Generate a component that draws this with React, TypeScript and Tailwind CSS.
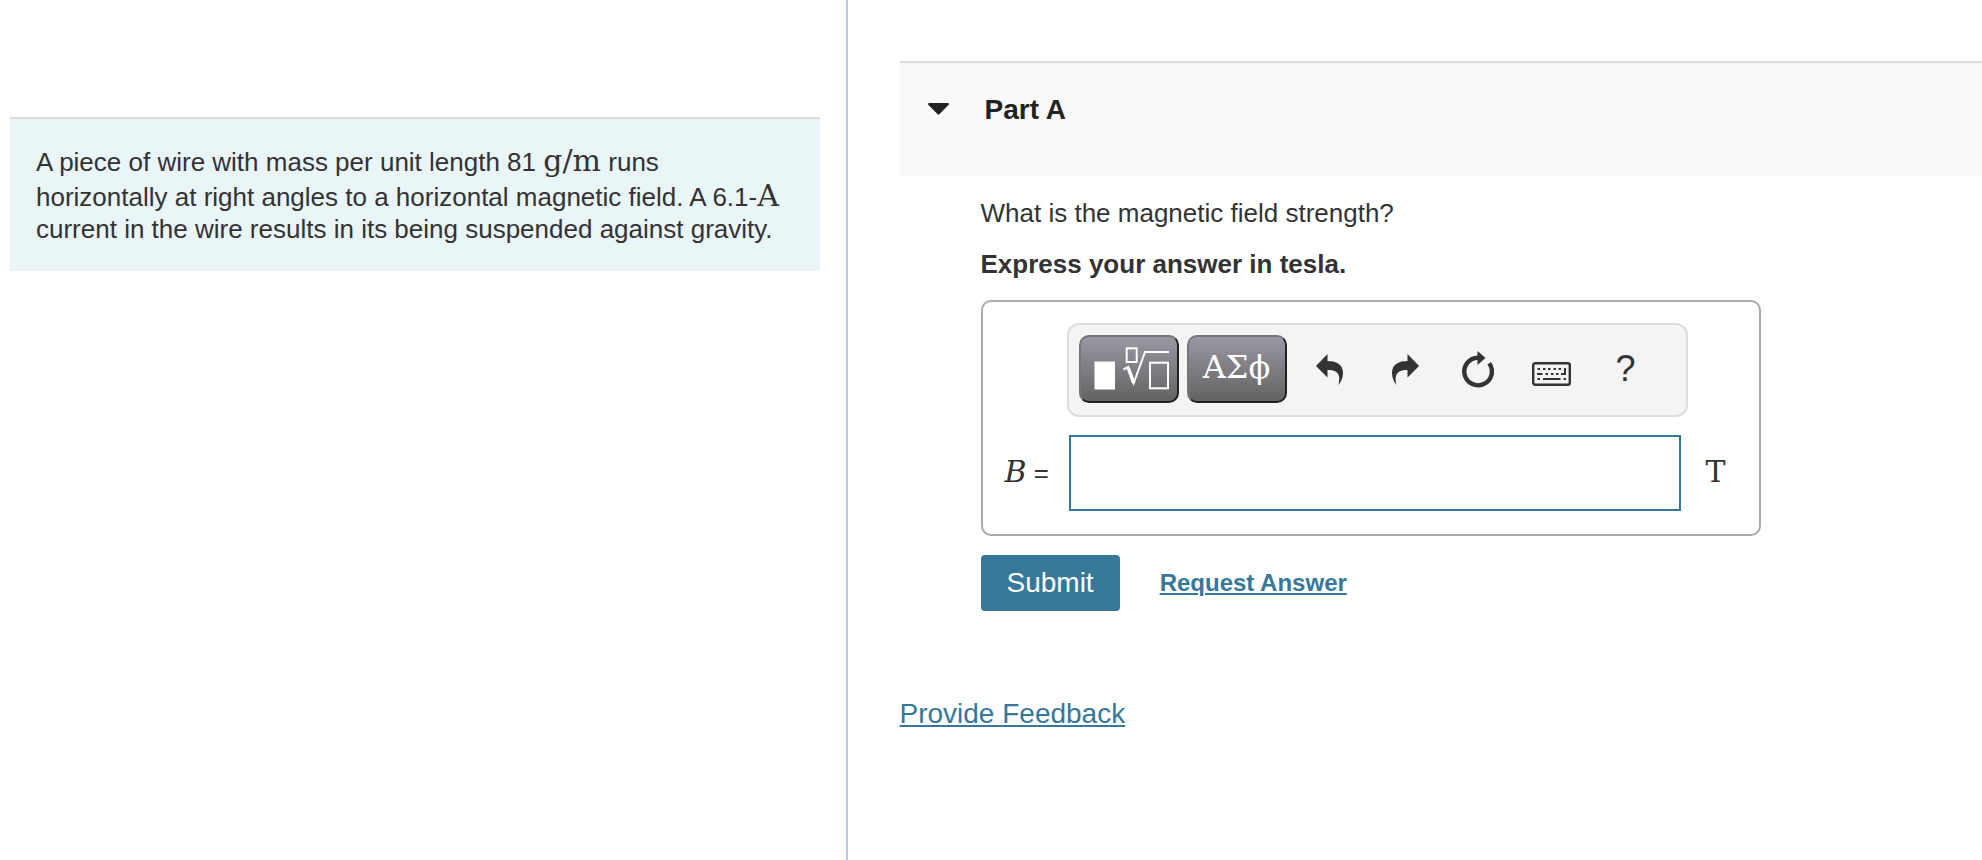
import { useState } from "react";
import type { ReactNode } from "react";

export default function App() {
  const [answer, setAnswer] = useState<string>("");

  const renderTools = tools.map((tool) => {
    return (
      <button
        key={tool.label}
        type="button"
        aria-label={tool.label}
        className="flex h-full w-[74px] items-center justify-center text-4xl text-[#333]"
      >
        {tool.icon}
      </button>
    );
  });

  return (
    <div className="flex min-h-screen bg-white font-['Liberation_Sans',Arial,sans-serif] text-[26px] leading-8 text-[#333]">
      <aside className="min-w-0 flex-[424] border-r-2 border-[#bdcadd] pt-[117px] pr-[26px] pl-[10px]">
        <p className="border-t-2 border-[#ddd] bg-[#eaf5f8] pt-6 pr-[30px] pb-[26px] pl-[26px]">
          A piece of wire with mass per unit length 81 <MathText>g/m</MathText>{" "}
          runs horizontally at right angles to a horizontal magnetic field. A
          6.1-<MathText>A</MathText> current in the wire results in its being
          suspended against gravity.
        </p>
      </aside>

      <main className="min-w-0 flex-[567] pt-[61px] pl-[52px]">
        <section>
          <div className="border-t-2 border-[#ddd] bg-[#f9f9f9] pt-[31px] pb-[50px] pl-7">
            <button
              type="button"
              className="flex items-center gap-9 text-[28px] font-bold text-[#222]"
            >
              <svg width="21" height="14" viewBox="0 0 21 14">
                <path
                  d="M1.4 0h18.2c1.2 0 1.7 1.2.9 2l-9.2 9.3c-.5.5-1.1.5-1.6 0L.5 2C-.3 1.2.2 0 1.4 0z"
                  fill="currentColor"
                />
              </svg>
              Part A
            </button>
          </div>

          <div className="pt-[21px] pl-[81px]">
            <p>What is the magnetic field strength?</p>
            <p className="mt-[19px] font-bold">Express your answer in tesla.</p>

            <div className="mt-5 max-w-[780px] rounded-[10px] border-2 border-[#aaa] pt-[21px] pb-[23px]">
              <div className="mr-[71px] ml-[84px] flex h-[94px] items-start rounded-xl border-2 border-[#ddd] bg-[#f4f4f4] p-[10px]">
                <button
                  type="button"
                  aria-label="Templates"
                  className="h-[68px] w-[100px] rounded-[10px] border-2 border-t-[#767676] border-r-[#212121] border-b-[#212121] border-l-[#767676] bg-linear-to-b from-[#9b98a3] to-[#636363]"
                >
                  <TemplateIcon />
                </button>
                <button
                  type="button"
                  aria-label="Symbols"
                  className="ml-2 h-[68px] w-[100px] rounded-[10px] border-2 border-t-[#767676] border-r-[#212121] border-b-[#212121] border-l-[#767676] bg-linear-to-b from-[#9b98a3] to-[#636363] pb-1 font-['DejaVu_Serif',serif] text-[32px] text-white"
                >
                  ΑΣϕ
                </button>
                <div className="ml-[6px] flex h-[68px]">{renderTools}</div>
              </div>

              <div className="mt-[18px] flex items-center pl-[22px]">
                <label htmlFor="answer" className="w-[64px] pb-1 whitespace-nowrap">
                  <i className="font-['DejaVu_Serif',serif] text-[30px] leading-[35px]">
                    B
                  </i>{" "}
                  =
                </label>
                <input
                  id="answer"
                  type="text"
                  value={answer}
                  onChange={(e) => setAnswer(e.target.value)}
                  className="h-[76px] min-w-0 flex-1 border-2 border-[#36789a] px-3 outline-none"
                />
                <span className="mr-[33px] ml-6 pb-1">
                  <MathText>T</MathText>
                </span>
              </div>
            </div>

            <div className="mt-[19px] flex items-center gap-10">
              <button
                type="button"
                className="h-14 rounded bg-[#36789a] px-[26px] text-[28px] text-white"
              >
                Submit
              </button>
              <a
                href="#request"
                className="text-2xl font-bold text-[#36789a] underline decoration-2 underline-offset-2"
              >
                Request Answer
              </a>
            </div>
          </div>
        </section>

        <a
          href="#feedback"
          className="mt-[87px] inline-block text-[28px] text-[#36789a] underline decoration-2 underline-offset-2"
        >
          Provide Feedback
        </a>
      </main>
    </div>
  );
}

function MathText({ children }: { children: ReactNode }) {
  return (
    <span className="font-['DejaVu_Serif',serif] text-[30px] leading-[35px]">
      {children}
    </span>
  );
}

function TemplateIcon() {
  return (
    <svg width="96" height="64" viewBox="-13 -9 96 64" fill="none" stroke="#fff">
      <rect x="0.5" y="15.5" width="20.5" height="28" fill="#fff" stroke="none" />
      <rect x="32.7" y="2.3" width="10" height="13.7" strokeWidth="2" />
      <path d="M29.3 23.5l5-2.5 5.4 16L51 6h24" strokeWidth="2" />
      <path d="M34.3 22l5.400 15" strokeWidth="3.5" />
      <rect x="56" y="16.7" width="18" height="25.6" strokeWidth="2" />
    </svg>
  );
}

const arrowPath =
  "M0 12L11.5 0V7C20 7 27 10 27 19C27 24 25 28 22.5 31C24 24 25 16 11.5 16V23.5z";

const tools: { label: string; icon: ReactNode }[] = [
  {
    label: "Undo",
    icon: (
      <svg width="27" height="31" viewBox="0 0 27 31" fill="currentColor">
        <path d={arrowPath} />
      </svg>
    ),
  },
  {
    label: "Redo",
    icon: (
      <svg width="31" height="31" viewBox="-4 0 31 31" fill="currentColor">
        <path d={arrowPath} transform="matrix(-1 0 0 1 27 0)" />
      </svg>
    ),
  },
  {
    label: "Reset",
    icon: (
      <svg width="32" height="37" viewBox="0 0 32 37" fill="none">
        <path
          d="M27.2 12.3A13.8 13.8 0 1 1 16 6.7"
          stroke="currentColor"
          strokeWidth="4.4"
        />
        <path d="M15.5 0l8 7L15.5 14z" fill="currentColor" />
      </svg>
    ),
  },
  {
    label: "Keyboard shortcuts",
    icon: (
      <svg
        width="39"
        height="34"
        viewBox="0 -10 39 34"
        fill="none"
        stroke="currentColor"
        strokeWidth="2"
      >
        <rect x="1.2" y="1.2" width="36.6" height="21.6" rx="2" strokeWidth="2.4" />
        <path d="M5.5 7h2.500M11 7h2.500M16 7h2.500M21.500 7h2.500M26.500 7h2.500" />
        <path d="M5 12h5.500M13.500 12h2.500M19 12h2.500M24 12h2.500M29 12h4V6" />
        <path d="M5.5 17h2.500M11 17h17.500M31.500 17h2.500" />
      </svg>
    ),
  },
  { label: "Help", icon: "?" },
];
